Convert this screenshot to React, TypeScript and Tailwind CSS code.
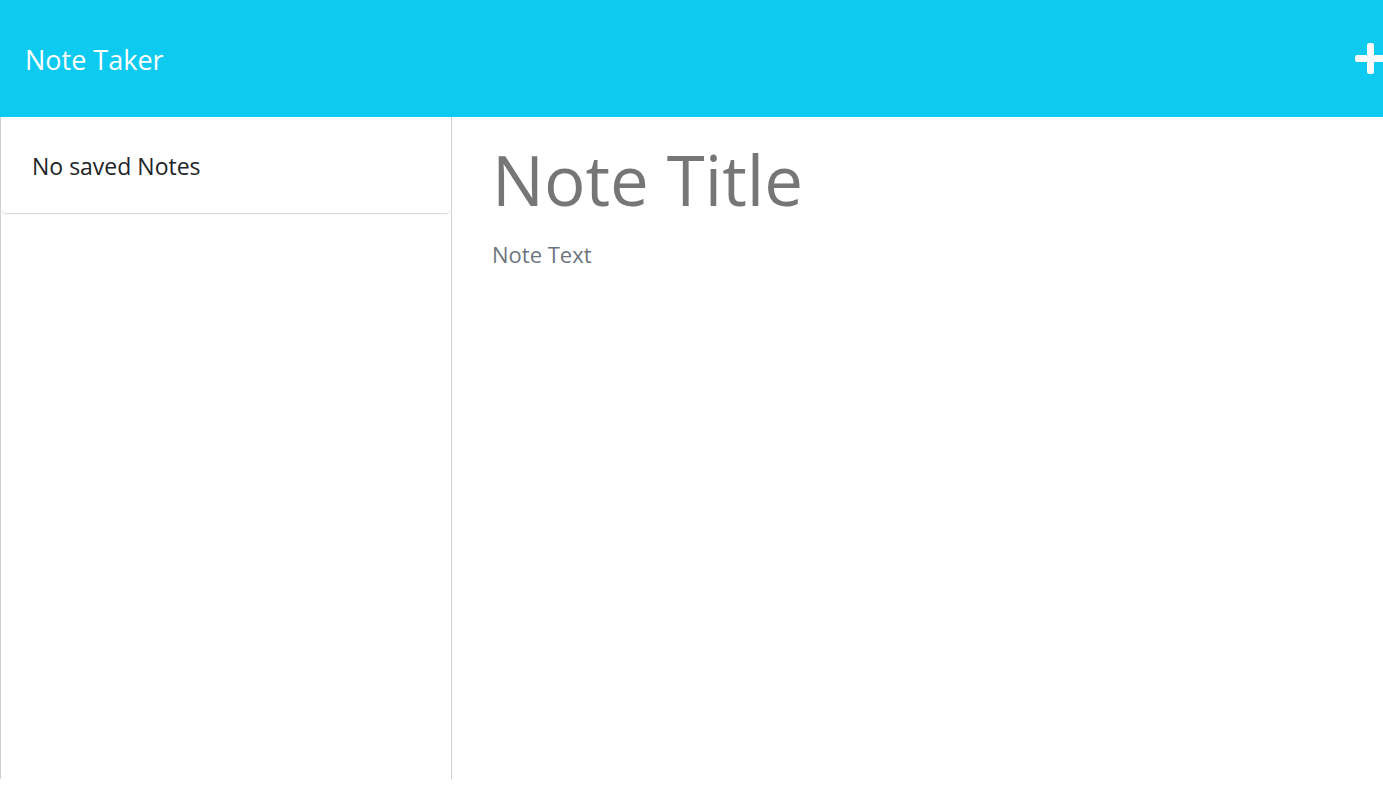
export default function App() {
  return (
    <div className="h-[789px] w-[1383px] overflow-hidden bg-white font-['Open_Sans',sans-serif]">
      <header className="flex h-[117px] items-center justify-between bg-[#0dcaf0] pl-[25px]">
        <h1 className="pt-[2px] text-[27px] leading-none text-white">Note Taker</h1>
        <span className="relative -mr-[3px] h-[31px] w-[31px]">
          <span className="absolute left-[12px] top-0 h-[31px] w-[7px] rounded-[2px] bg-[#f8f9fa]" />
          <span className="absolute left-0 top-[12px] h-[7px] w-[31px] rounded-[2px] bg-[#f8f9fa]" />
        </span>
      </header>
      <div className="flex h-[662px]">
        <aside className="w-[452px] shrink-0 border-x border-[#cfcfcf]">
          <div className="flex h-[97px] items-center rounded-b-[5px] border-b border-[#dcdcdc] pl-[31px] pt-[3px] shadow-[0_1px_1px_rgba(0,0,0,0.04)]">
            <span className="text-[23px] text-[#212529]">No saved Notes</span>
          </div>
        </aside>
        <main className="flex-1 pl-[40px] pt-[22px]">
          <div className="text-[69px] leading-[80px] text-[#767676]">Note Title</div>
          <div className="mt-[20px] text-[22px] leading-[30px] text-[#6c757d]">Note Text</div>
        </main>
      </div>
    </div>
  );
}
